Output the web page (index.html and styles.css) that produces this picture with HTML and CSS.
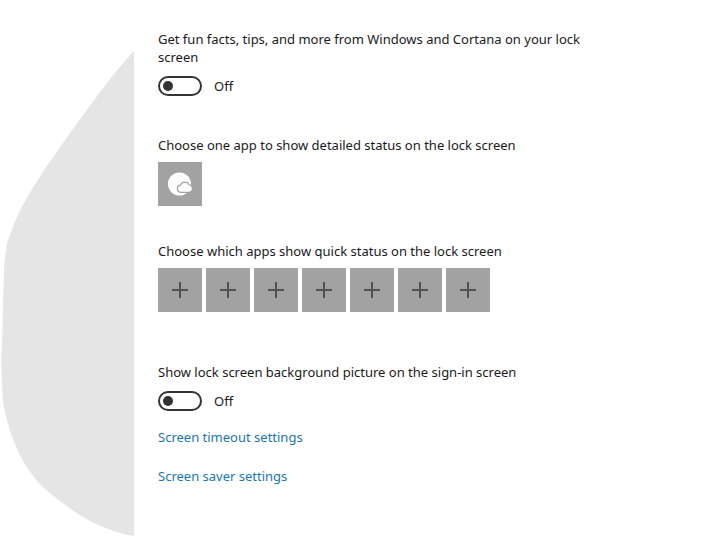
FILE: index.html
```html
<!DOCTYPE html>
<html lang="en">
<head>
    <meta charset="UTF-8">
    <meta name="viewport" content="width=device-width, initial-scale=1.0">
    <title>Lock screen settings</title>
    <link rel="stylesheet" href="styles.css">
</head>
<body>

    <!-- Grey shape on the left -->
    <div class="side-shape">
        <svg width="134" height="537" viewBox="0 0 134 537" aria-hidden="true">
            <path fill="#e5e5e5" d="M134 51 C117 69 102 89 87 110 C71 131 55 154 41 175 C27 197 18 212 13 227 L7 243 C5 256 4 266 4 275 L3 303 L2 345 C1 358 1 370 3 402 C8 429 16 450 26 466 C33 476 38 483 43 487 C60 502 80 517 98 525 C110 530 121 534 134 536 Z"/>
        </svg>
    </div>

    <!-- Settings -->
    <main class="settings">
        <section class="setting">
            <label class="setting-text" for="funFacts">Get fun facts, tips, and more from Windows and Cortana on your lock screen</label>
            <div class="toggle-row">
                <input type="checkbox" class="toggle" id="funFacts">
                <span>Off</span>
            </div>
        </section>

        <section class="setting">
            <p class="setting-text">Choose one app to show detailed status on the lock screen</p>
            <div class="tiles">
                <button type="button" class="tile" aria-label="Weather">
                    <svg width="44" height="44" viewBox="0 0 44 44" aria-hidden="true">
                        <circle cx="21.5" cy="22" r="11.5" fill="#fff"/>
                        <path fill="#fff" stroke="#a2a2a2" stroke-width="1.2" d="M22.6 30.3 A3.6 3.6 0 0 1 22.2 23.2 A4.9 4.9 0 0 1 31.2 22.8 A3.8 3.8 0 0 1 31.2 30.3 Z"/>
                    </svg>
                </button>
            </div>
        </section>

        <section class="setting">
            <p class="setting-text">Choose which apps show quick status on the lock screen</p>
            <div class="tiles">
                <button type="button" class="tile add" aria-label="Add app 1"></button>
                <button type="button" class="tile add" aria-label="Add app 2"></button>
                <button type="button" class="tile add" aria-label="Add app 3"></button>
                <button type="button" class="tile add" aria-label="Add app 4"></button>
                <button type="button" class="tile add" aria-label="Add app 5"></button>
                <button type="button" class="tile add" aria-label="Add app 6"></button>
                <button type="button" class="tile add" aria-label="Add app 7"></button>
            </div>
        </section>

        <section class="setting sign-in">
            <label class="setting-text" for="signInPicture">Show lock screen background picture on the sign-in screen</label>
            <div class="toggle-row">
                <input type="checkbox" class="toggle" id="signInPicture">
                <span>Off</span>
            </div>
        </section>

        <nav class="links">
            <a href="#timeout">Screen timeout settings</a>
            <a href="#saver">Screen saver settings</a>
        </nav>
    </main>

</body>
</html>
```

FILE: styles.css
```css
body {
    margin: 0;
    display: flex;
    background-color: white;
    color: #1a1a1a;
    font-family: "Noto Sans", "Open Sans", sans-serif;
    font-size: 13px;
    line-height: 18px;
}

/* Side Shape */
.side-shape {
    flex: none;
}

.side-shape svg {
    display: block;
}

/* Settings Column */
.settings {
    flex: 1;
    max-width: 440px;
    padding: 30px 24px;
}

.setting {
    margin-bottom: 36px;
}

.setting-text {
    display: block;
    margin: 0 0 8px;
}

/* Toggle Switch */
.toggle-row {
    display: flex;
    align-items: center;
    gap: 12px;
    padding: 2px 0 4px;
}

.toggle {
    appearance: none;
    box-sizing: border-box;
    display: flex;
    align-items: center;
    width: 44px;
    height: 20px;
    margin: 0;
    padding: 0 3px;
    border: 2px solid #333;
    border-radius: 10px;
}

.toggle::before {
    content: "";
    width: 10px;
    height: 10px;
    border-radius: 50%;
    background-color: #333;
}

.toggle:checked {
    justify-content: flex-end;
}

/* App Tiles */
.tiles {
    display: flex;
    flex-wrap: wrap;
    gap: 4px;
}

.tile {
    display: flex;
    align-items: center;
    justify-content: center;
    width: 44px;
    height: 44px;
    padding: 0;
    border: none;
    background-color: #a2a2a2;
    cursor: pointer;
}

/* Plus sign made of two crossing bars */
.add {
    background-image: linear-gradient(#505050, #505050), linear-gradient(#505050, #505050);
    background-size: 16px 2px, 2px 16px;
    background-position: center;
    background-repeat: no-repeat;
}

/* Sign-in Setting */
.sign-in {
    margin-top: 51px;
    margin-bottom: 13px;
}

/* Links */
.links {
    display: flex;
    flex-direction: column;
    align-items: flex-start;
    gap: 21px;
}

.links a {
    color: #1a76b0;
    text-decoration: none;
}
```
